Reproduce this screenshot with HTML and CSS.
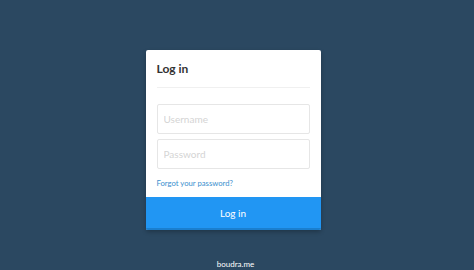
FILE: index.html
```html
<!DOCTYPE html>
<html>
<head>
<meta charset="utf-8">
<link rel="stylesheet" href="styles.css">
</head>
<body>
<div class="page">
  <form class="card">
    <div class="card-body">
      <h1 class="title">Log in</h1>
      <input class="field field-first" type="text" placeholder="Username">
      <input class="field" type="password" placeholder="Password">
      <a class="forgot" href="#">Forgot your password?</a>
    </div>
    <button class="submit" type="button">Log in</button>
  </form>
  <div class="footer">boudra.me</div>
</div>
</body>
</html>
```

FILE: styles.css
```css
* { box-sizing: border-box; }
html, body { margin: 0; padding: 0; }
body {
  background: #2b4861;
  font-family: Lato, "Open Sans", "Liberation Sans", sans-serif;
}
.page {
  height: 270px;
  display: flex;
  flex-direction: column;
  align-items: center;
  padding-top: 50px;
}
.card {
  width: 175px;
  background: #fff;
  border-radius: 2px;
  box-shadow: 0 2px 4px rgba(0,0,0,0.25);
  display: flex;
  flex-direction: column;
  overflow: hidden;
  margin-right: 8px;
}
.card-body {
  padding: 11px 11px 0 11px;
  display: flex;
  flex-direction: column;
}
.title {
  margin: 0;
  font-size: 12px;
  line-height: 16px;
  font-weight: 700;
  color: #333;
  padding-bottom: 10px;
  border-bottom: 1px solid #f0f0f0;
}
.field {
  display: block;
  width: 100%;
  height: 30px;
  border: 1px solid #e6e6e6;
  border-radius: 2px;
  padding: 0 6px;
  font-family: inherit;
  font-size: 10px;
  color: #333;
  background: #fff;
  outline: none;
  margin-top: 5px;
}
.field-first { margin-top: 16px; }
.field::placeholder { color: #d4d4d4; }
.forgot {
  margin-top: 9px;
  font-size: 7.7px;
  line-height: 10px;
  color: #3b8fce;
  text-decoration: none;
  align-self: flex-start;
}
.submit {
  margin-top: 9px;
  height: 33px;
  border: 0;
  border-bottom: 2px solid #1a7fcf;
  background: #2196f3;
  color: #fff;
  font-family: inherit;
  font-size: 10px;
  padding: 0;
}
.footer {
  margin-top: auto;
  margin-bottom: 0;
  margin-right: 3px;
  color: #fff;
  font-size: 8px;
  line-height: 12px;
}
```
